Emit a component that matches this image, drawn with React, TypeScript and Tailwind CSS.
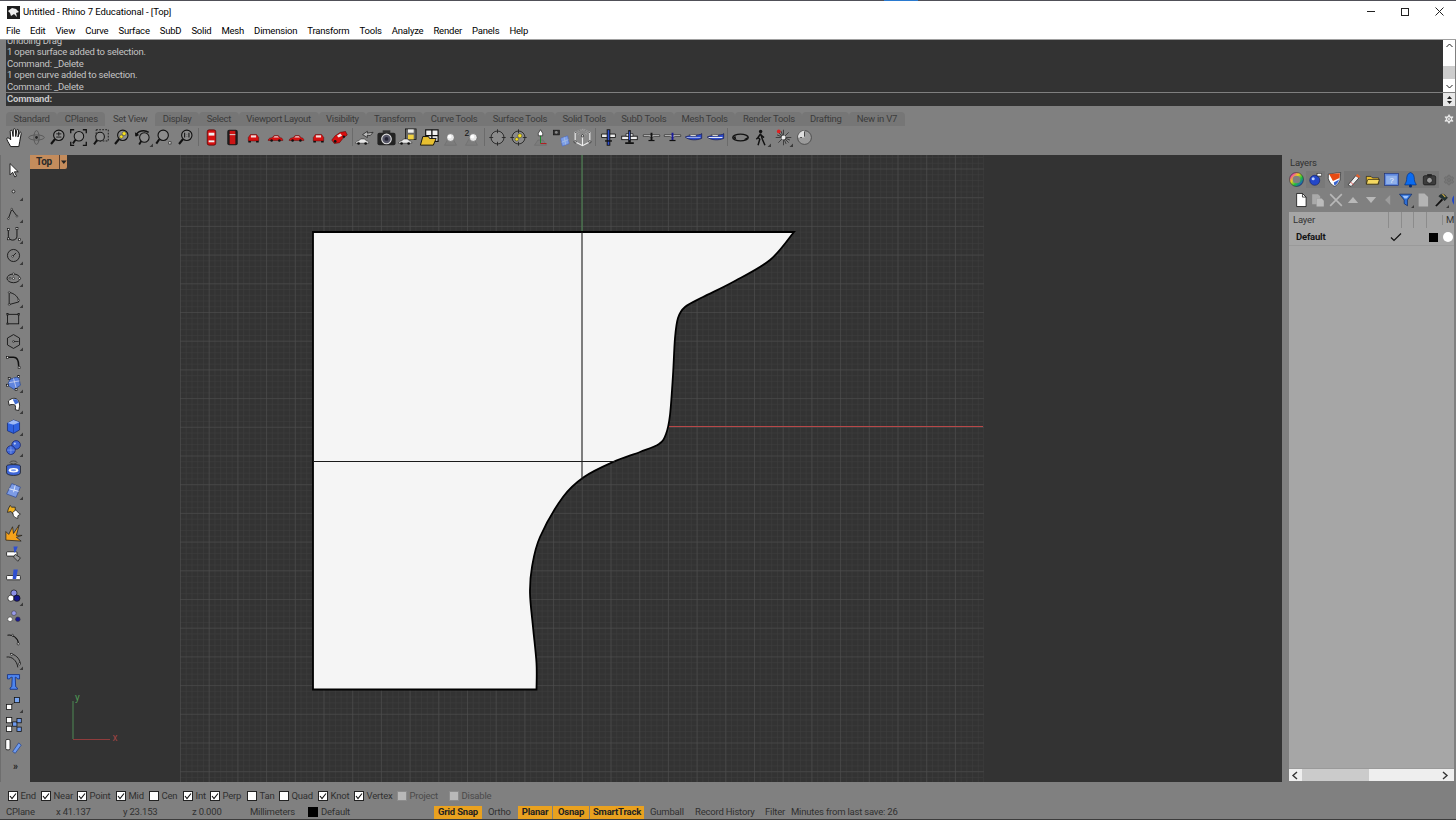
import React from "react";
import { Settings } from "lucide-react";

const K = "#111";
const BL = "#2f4fd0";

function Ico({ children, fly, s = 19 }: { children?: React.ReactNode; fly?: boolean; s?: number }) {
  return (
    <svg width={s} height={s} viewBox="0 0 22 22" className="block flex-none overflow-visible">
      {children}
      {fly && <path d="M22 18V22H18Z" fill="#3a3a3a" />}
    </svg>
  );
}

const Glass = ({ fill = "#8c8c8c", children }: { fill?: string; children?: React.ReactNode }) => (
  <>
    <circle cx="12.5" cy="8.5" r="6" fill={fill} stroke={K} strokeWidth="1.3" />
    <path d="M8 13L3.5 18.5" stroke={K} strokeWidth="2.4" />
    {children}
  </>
);

const CarSide = ({ dark }: { dark?: boolean }) => (
  <>
    <path d="M2.5 14.5C2.5 12 5 11.5 7 11.2L9.5 8.8H14L16.5 11.2C18.5 11.5 19.5 12.5 19.5 14.5Z" fill={dark ? "#222" : "#d81010"} stroke="#5a0a0a" strokeWidth=".6" />
    <path d="M8.5 11L10 9.5H13.5L15 11Z" fill="#ddd" />
    <circle cx="6.5" cy="14.5" r="1.5" fill="#111" />
    <circle cx="15.5" cy="14.5" r="1.5" fill="#111" />
  </>
);
const CarWhite = () => (
  <>
    <path d="M1.5 17C1.5 15 3.5 14.8 5 14.5L7 12.5H11L13 14.5C15 14.8 15.5 15.5 15.5 17Z" fill="#e8e8e8" stroke="#222" strokeWidth=".6" />
    <circle cx="4.8" cy="17.3" r="1.4" fill="#111" />
    <circle cx="12.2" cy="17.3" r="1.4" fill="#111" />
  </>
);
const CarFront = () => (
  <>
    <path d="M5 15V11L7.5 7.5H14.5L17 11V15Z" fill="#d81010" stroke="#5a0a0a" strokeWidth=".6" />
    <rect x="8" y="8.5" width="6" height="2.5" fill="#f0e0e0" />
    <rect x="5" y="15" width="3" height="1.8" fill="#111" />
    <rect x="14" y="15" width="3" height="1.8" fill="#111" />
  </>
);
const PlaneSide = ({ alt }: { alt?: boolean }) => (
  <>
    <path d="M1.5 10.5C5 8.5 14 8.5 19 7.5L20.5 6.5V12C15 14.5 6 14.5 1.5 10.5Z" fill={BL} stroke="#0a0a40" strokeWidth=".7" />
    <path d="M6 7.5H13L15 9.5H8Z" fill="#eee" stroke={K} strokeWidth=".5" />
    <path d="M3 11H19" stroke="#fff" strokeWidth={alt ? 1 : 0.6} />
  </>
);
const PlaneTop = ({ dark }: { dark?: boolean }) => (
  <>
    <path d="M1.5 8H20.5V9.8H14L11 11L8 9.8H1.5Z" fill="#e6e6e6" stroke={K} strokeWidth=".7" />
    <path d="M11 5.5V15" stroke={dark ? "#1a1a9a" : K} strokeWidth="2.2" />
    <path d="M7.5 14.5H14.5" stroke={K} strokeWidth="1.4" />
  </>
);
const Sphere = ({ c = 11, y = 11, r = 4.5 }: { c?: number; y?: number; r?: number }) => (
  <>
    <circle cx={c} cy={y} r={r} fill="#e8e8e8" stroke="#444" strokeWidth=".6" />
    <circle cx={c - 1} cy={y - 1} r={r / 2.2} fill="#fff" />
  </>
);
const Cross = ({ y }: { y?: boolean }) => (
  <>
    <circle cx="11" cy="11" r="7.5" fill="#8a8a8a" stroke="#222" strokeWidth="1" />
    <path d="M11 1.5V6M11 16V20.5M1.5 11H6M16 11H20.5" stroke="#222" strokeWidth="1" />
    {y && <><circle cx="12.5" cy="9" r="2.4" fill="#f5e020" stroke="#222" strokeWidth=".5" /><circle cx="9" cy="13" r="2" fill="#f5e020" stroke="#222" strokeWidth=".5" /></>}
  </>
);
const Dot = ({ x, y, r = 1.3 }: { x: number; y: number; r?: number }) => <circle cx={x} cy={y} r={r} fill="#eee" stroke={K} strokeWidth=".8" />;
const Sq = ({ x, y, f = "#fff", s = 2.2 }: { x: number; y: number; f?: string; s?: number }) => <rect x={x - s / 2} y={y - s / 2} width={s} height={s} fill={f} stroke={K} strokeWidth=".8" />;

const topGroups: React.ReactNode[][] = [
  [
    <Ico s={21}><path d="M7 20.5C5 16.5 2.5 13.5 3 11.8C4 10.8 6 12 7 13.5L6.5 4.5C6.5 3 8.5 3 8.7 4.5L9.5 10L9.8 2.8C10 1.5 12 1.5 12 3L12.3 10L13.4 3.5C13.7 2 15.5 2.3 15.3 4L14.6 10.5L16.3 6C16.8 4.8 18.3 5.3 18 7L16.5 15C16 17 16 19 15.5 20.5Z" fill="#fff" stroke={K} strokeWidth="1" /></Ico>,
    <Ico><ellipse cx="11" cy="11" rx="9" ry="3" fill="none" stroke="#555" strokeWidth="1" /><ellipse cx="11" cy="11" rx="3" ry="8" fill="none" stroke="#555" strokeWidth="1" /><circle cx="11" cy="11" r="1.6" fill="#222" /></Ico>,
    <Ico><Glass><path d="M9.5 6.8H15.5M12.5 4.5V9M9.5 10.5H15.5" stroke={K} strokeWidth="1" /></Glass></Ico>,
    <Ico><path d="M2 6V2H6M16 2H20V6M20 16V20H16M6 20H2V16" fill="none" stroke={K} strokeWidth="1.5" /><circle cx="11.5" cy="9.5" r="5.5" fill="#8c8c8c" stroke={K} strokeWidth="1.2" /><path d="M7.5 13.5L4.5 18" stroke={K} strokeWidth="2.2" /></Ico>,
    <Ico><rect x="6" y="2" width="14" height="13" fill="none" stroke={K} strokeWidth="1" strokeDasharray="2 1.5" /><circle cx="10.5" cy="10" r="5" fill="#8c8c8c" stroke={K} strokeWidth="1.2" /><path d="M7 14L3.5 19" stroke={K} strokeWidth="2.2" /></Ico>,
    <Ico><Glass><circle cx="14" cy="6.5" r="2.3" fill="#f5e020" stroke="#333" strokeWidth=".5" /><circle cx="10.8" cy="10" r="2" fill="#f5e020" stroke="#333" strokeWidth=".5" /></Glass></Ico>,
    <Ico fly><circle cx="12" cy="11" r="5.5" fill="#8c8c8c" stroke={K} strokeWidth="1.2" /><path d="M8.5 15L6 19" stroke={K} strokeWidth="2.2" /><path d="M2 9C4 3 12 1.5 17 5" fill="none" stroke={K} strokeWidth="1.8" /><path d="M1 5L2 10L6 8Z" fill={K} /></Ico>,
    <Ico><circle cx="9.5" cy="8.5" r="6" fill="#8c8c8c" stroke={K} strokeWidth="1.3" /><path d="M5 13L1.5 18" stroke={K} strokeWidth="2.4" /><rect x="16" y="16" width="2.5" height="2.5" fill="#fff" stroke={K} strokeWidth=".7" /></Ico>,
    <Ico><Glass><path d="M10 5.5V11M15 5.5V11M12.5 7V7.2M12.5 9.5V9.7" stroke={K} strokeWidth="1.2" /></Glass></Ico>,
  ],
  [
    <Ico s={21}><rect x="6.5" y="3" width="9" height="16" rx="2" fill="#d81010" stroke="#400" strokeWidth=".7" /><rect x="8" y="6" width="6" height="3" fill="#eee" /><rect x="8" y="14" width="6" height="2" fill="#eee" /></Ico>,
    <Ico s={21}><rect x="5.5" y="3" width="11" height="16" rx="2" fill="#1c1c1c" /><rect x="8" y="4" width="6" height="14" fill="#cc1515" /><path d="M8 8H14" stroke="#ddd" strokeWidth="1" /></Ico>,
    <Ico><CarFront /></Ico>,
    <Ico><CarSide /></Ico>,
    <Ico><CarSide /></Ico>,
    <Ico><CarFront /></Ico>,
    <Ico><path d="M2 14L6 9L12 5L18 4L20 8L15 12L11 17L5 18Z" fill="#d81010" stroke="#500" strokeWidth=".6" /><path d="M8 9L12 6.5L14 9L10 11Z" fill="#eee" /><circle cx="6" cy="15.5" r="1.6" fill="#111" /><circle cx="16" cy="10" r="1.4" fill="#111" /></Ico>,
  ],
  [
    <Ico s={21}><CarWhite /><path d="M9 8L14 4.5V6.5L20 5.5L17 9L14 8.5V11Z" fill="#bbb" stroke={K} strokeWidth=".7" /></Ico>,
    <Ico s={21}><rect x="1.5" y="6" width="19" height="13" rx="2" fill="#222" /><rect x="7" y="3.5" width="8" height="3" fill="#333" /><circle cx="11" cy="12.5" r="5" fill="#556" stroke="#ddd" strokeWidth="1.2" /><circle cx="11" cy="12.5" r="2" fill="#223" /></Ico>,
    <Ico s={21}><rect x="9" y="2" width="11" height="11" fill="#666" stroke={K} strokeWidth=".8" /><rect x="11.5" y="2.5" width="6" height="3.5" fill="#eee" /><rect x="11.5" y="8" width="6" height="5" fill="#f0d040" /><CarWhite /></Ico>,
    <Ico s={21}><path d="M7 3H20V15H7Z" fill="#f0f0f0" stroke={K} strokeWidth="1.2" /><path d="M13.5 3V15M7 9H20" stroke={K} strokeWidth="1.4" /><path d="M1.5 19L4 10H10L11 12H18L15 19Z" fill="#e8c030" stroke={K} strokeWidth="1" /></Ico>,
    <Ico><path d="M4 20L8 13H14L18 20Z" fill="#7c7c7c" stroke="#6a6a6a" strokeWidth=".6" /><Sphere /></Ico>,
    <Ico><path d="M4 20L8 13H14L18 20Z" fill="#7c7c7c" stroke="#6a6a6a" strokeWidth=".6" /><Sphere c={13} /><text x="3" y="9" fontSize="10" fill="#111" fontFamily="'Liberation Sans',sans-serif">2</text></Ico>,
  ],
  [
    <Ico><Cross /></Ico>,
    <Ico><Cross y /></Ico>,
    <Ico><path d="M4 20L8 14H14L18 20Z" fill="#7c7c7c" stroke="#666" strokeWidth=".6" /><path d="M11 8V18" stroke="#1a8a2a" strokeWidth="1.2" /><path d="M11 18H18" stroke="#b02020" strokeWidth="1.2" /><path d="M8.5 6L11 2L13.5 6V9H8.5Z" fill="#fff" stroke={K} strokeWidth=".7" /></Ico>,
    <Ico><rect x="1.5" y="2.5" width="7" height="5.5" fill="#333" stroke={K} strokeWidth=".7" /><circle cx="5" cy="5.2" r="1.6" fill="#888" /><path d="M10 12L18 9L20 18L12 21Z" fill="#7ea0e8" stroke="#4a68c0" strokeWidth=".7" /><path d="M14 10.5L16 19.5M11 16.5L19 13.5" stroke="#bcd" strokeWidth=".6" /></Ico>,
    <Ico><path d="M11 1.5L19.5 5V16L11 20.5L2.5 16V5Z" fill="#8a8a8a" stroke="#eee" strokeWidth="1.3" /><path d="M2.5 5L11 9V20.5M11 9L19.5 5" stroke="#eee" strokeWidth="1.3" fill="none" /><path d="M11 1.5L19.5 5L11 9L2.5 5Z" fill="none" stroke={K} strokeWidth=".6" /><Dot x={11} y={9} /><Dot x={2.5} y={16} /><Dot x={19.5} y={16} /></Ico>,
  ],
  [
    <Ico><path d="M3 7H19V11H3Z" fill="#eee" stroke={K} strokeWidth="1" /><path d="M11 1.5V20.5" stroke={K} strokeWidth="4.2" /><path d="M11 2.5V19.5" stroke={BL} strokeWidth="2" /><path d="M7 15H15" stroke={K} strokeWidth="1.6" /></Ico>,
    <Ico><rect x="2" y="9.5" width="18" height="4" fill="#eee" stroke={K} strokeWidth="1" /><path d="M7 6.5H15V9.5H7Z" fill="#eee" stroke={K} strokeWidth=".8" /><path d="M11 2.5V17" stroke={K} strokeWidth="3" /><path d="M11 4V14" stroke={BL} strokeWidth="1.4" /><path d="M6 17.5H16" stroke={K} strokeWidth="2" /></Ico>,
    <Ico><PlaneTop /></Ico>,
    <Ico><PlaneTop dark /></Ico>,
    <Ico><PlaneSide /></Ico>,
    <Ico><PlaneSide alt /></Ico>,
  ],
  [
    <Ico><ellipse cx="11" cy="11" rx="9" ry="4" fill="none" stroke={K} strokeWidth="1.5" /><path d="M5 9L2 12L6 13Z" fill={K} /><path d="M15 13L20 10L18 14Z" fill={K} /></Ico>,
    <Ico fly><circle cx="10" cy="4" r="2" fill={K} /><path d="M10 6.5L7 11L9 13L7 20M10 6.5L12 13L15 20M10 8L14 11M7 11L5 13" fill="none" stroke={K} strokeWidth="1.7" /></Ico>,
    <Ico fly><path d="M11 2V20M2 11H20M5 5L17 17M17 5L5 17M8 3.5L14 18.5M3.5 8L18.5 14" stroke="#222" strokeWidth=".8" /><circle cx="11" cy="11" r="2.2" fill="#eee" /><circle cx="5.5" cy="4" r="2.2" fill="#e02020" /></Ico>,
    <Ico><circle cx="11" cy="11" r="8" fill="#9a9a9a" stroke="#444" strokeWidth="1" /><path d="M3.5 11A8 8 0 0 1 11 3L11 11Z" fill="#ddd" /><path d="M11 4V10M8 11H6" stroke="#333" strokeWidth="1" /></Ico>,
  ],
];

const leftIcons: React.ReactNode[] = [
  <Ico><path d="M7 3V16L10 13L12.5 18.5L14.5 17.5L12 12.5H16.5Z" fill="#fff" stroke={K} strokeWidth="1" /></Ico>,
  <Ico fly><circle cx="11" cy="11" r="1.6" fill="#ccc" stroke={K} strokeWidth=".9" /></Ico>,
  <Ico fly><path d="M5 17L9 6L15 14" fill="none" stroke={K} strokeWidth="1" /><Dot x={5} y={17} r={1} /><Dot x={9} y={6} r={1} /><Dot x={15} y={14} r={1} /></Ico>,
  <Ico fly><path d="M5 5V13C5 19 15 19 15 13V5" fill="none" stroke={K} strokeWidth="1.1" /><Sq x={5} y={5} /><Sq x={15} y={4} /><Sq x={5} y={16} /><Sq x={18} y={17} /></Ico>,
  <Ico fly><circle cx="11" cy="11" r="7" fill="none" stroke={K} strokeWidth="1" /><path d="M10 12L14 8" stroke={K} strokeWidth="1" /><Dot x={10} y={12} r={1} /></Ico>,
  <Ico fly><ellipse cx="11" cy="12" rx="7.5" ry="5" fill="none" stroke={K} strokeWidth="1" /><Dot x={11} y={7} r={1.2} /><Dot x={11} y={12} r={1.2} /><Dot x={18} y={12} r={1.2} /><Dot x={7} y={12} r={1} /></Ico>,
  <Ico fly><path d="M6 4C12 5 17 9 17 15L6 18Z" fill="none" stroke={K} strokeWidth="1" /><Dot x={6} y={4} r={1} /><Dot x={17} y={13} r={1} /><Dot x={6} y={18} r={1} /></Ico>,
  <Ico fly><rect x="4" y="5" width="13" height="11" fill="none" stroke={K} strokeWidth="1" /><Sq x={4} y={5} s={1.6} /><Sq x={17} y={5} s={1.6} /><Sq x={4} y={16} s={1.6} /></Ico>,
  <Ico fly><path d="M11 3L18 7V15L11 19L4 15V7Z" fill="none" stroke={K} strokeWidth="1" /><Dot x={11} y={11} r={1.1} /><path d="M11 11H17" stroke={K} strokeWidth=".8" /></Ico>,
  <Ico><path d="M5 5H11C15 5 17 9 17 15" fill="none" stroke={K} strokeWidth="1.7" /><Sq x={4} y={5} /><Sq x={17.5} y={17} /></Ico>,
  <Ico fly><path d="M7 6L17 3L19 13L12 18L4 13Z" fill="#5f84dd" stroke="#22418e" strokeWidth=".8" /><path d="M11 5L14 16M6 10L18 8" stroke="#dde" strokeWidth=".8" /><Sq x={6} y={5} /><Sq x={17} y={3} /><Sq x={4} y={13} /><Sq x={14} y={18} /></Ico>,
  <Ico fly><path d="M5 7C9 3 14 3 16 6C19 10 18 14 17 18L13 17C14 13 13 11 11 11C9 11 7 11 6 12Z" fill="#fff" stroke={K} strokeWidth="1" /><path d="M10 5L13 11L17 9L15 5Z" fill="#3f6ad0" /></Ico>,
  <Ico fly><path d="M4 7L11 3.5L18 6V15L11 19L4 16Z" fill="#2f62e0" stroke="#10246e" strokeWidth=".8" /><path d="M4 7L11 3.5L18 6L11 9Z" fill="#9db9f5" /><path d="M11 9V19" stroke="#1b3596" strokeWidth=".7" /></Ico>,
  <Ico fly><circle cx="14" cy="8" r="5" fill="#3e66d8" stroke="#111a60" strokeWidth=".8" /><circle cx="8" cy="14" r="5" fill="#3e66d8" stroke="#111a60" strokeWidth=".8" /><path d="M3.5 14H12.5M8 9.5V18.5" stroke="#a8bcf0" strokeWidth=".6" /><circle cx="12.5" cy="6.5" r="1.3" fill="#b8c8f5" /></Ico>,
  <Ico><ellipse cx="11" cy="4" rx="4" ry="1.7" fill="none" stroke="#333" strokeWidth=".8" /><path d="M3 8C3 6 19 6 19 8V16C19 20 3 20 3 16Z" fill="#3e66d8" stroke="#111" strokeWidth=".8" /><ellipse cx="11" cy="13" rx="5.5" ry="2.6" fill="#fff" /><ellipse cx="11" cy="13" rx="3" ry="1.2" fill="#7e9eee" /></Ico>,
  <Ico fly><path d="M3 15L9 3L19 7L14 19Z" fill="#7d9ce6" stroke="#2c468f" strokeWidth=".8" /><path d="M11 13L13 5M6 9L17 12" stroke="#e4ebfb" strokeWidth="1" /></Ico>,
  <Ico><path d="M5 8L7 4L9 6L13 6L13 10L15 12L11 14L8 11L4 12Z" fill="#f0b020" stroke={K} strokeWidth=".8" /><path d="M10 12L14 9L16 12L19 14L16 16L16 19L13 18L11 16Z" fill="#fff" stroke={K} strokeWidth=".8" /></Ico>,
  <Ico s={21}><path d="M3 19V10L6 13L10 5L11 12L17 3L14 14L20 14L14 16L19 20Z" fill="#f6a21a" stroke="#222" strokeWidth=".8" /></Ico>,
  <Ico><rect x="3" y="9" width="12" height="5" rx="1" fill="#fff" stroke={K} strokeWidth=".9" /><path d="M11 3H16L13.5 9L12 10Z" fill="#2f4fd0" /><path d="M13 12L19 16L16 20L11 15Z" fill="#9a9a9a" stroke={K} strokeWidth=".8" /></Ico>,
  <Ico><rect x="3" y="11" width="16" height="5" rx="1" fill="#fff" stroke={K} strokeWidth=".9" /><path d="M11 4H16L14 15H10Z" fill="#2f4fd0" /></Ico>,
  <Ico fly><circle cx="11.5" cy="7" r="3.6" fill="#8d90e6" stroke={K} strokeWidth=".8" /><circle cx="8" cy="13" r="3.6" fill="#fff" stroke={K} strokeWidth=".8" /><circle cx="15" cy="13" r="3.6" fill="#15158c" stroke={K} strokeWidth=".8" /></Ico>,
  <Ico><circle cx="11.5" cy="6" r="2.7" fill="#9a9cea" stroke="#333" strokeWidth=".6" /><circle cx="7" cy="13" r="2.7" fill="#fff" stroke="#333" strokeWidth=".6" /><circle cx="16" cy="13" r="2.7" fill="#1a1a90" stroke="#333" strokeWidth=".6" /></Ico>,
  <Ico><path d="M4 6C10 5 16 9 17 16" fill="none" stroke={K} strokeWidth="1.2" /><Dot x={10} y={6} r={1} /><Dot x={16.5} y={16} r={1.3} /></Ico>,
  <Ico fly><path d="M3 7C9 6 15 11 16 19M7 3C13 4 18 8 19 15" fill="none" stroke={K} strokeWidth="1" /><Dot x={9} y={4} r={1.2} /><Dot x={18} y={15} r={1.2} /></Ico>,
  <Ico><path d="M4 3H18V8H15.5C15 6.5 14 6 13 6L13.5 17L15.5 18.5V20H7V18.5L9 17L9.5 6C8 6 7 6.5 6.5 8H4Z" fill="#4f86ee" stroke="#0c2a80" strokeWidth=".9" /></Ico>,
  <Ico fly><rect x="3" y="12" width="6" height="6" fill="#fff" stroke={K} strokeWidth=".9" /><rect x="12" y="4" width="6" height="6" fill="#79a6f2" stroke={K} strokeWidth=".9" /><path d="M9 12L12 10" stroke={K} strokeWidth=".9" strokeDasharray="1.5 1" /></Ico>,
  <Ico><rect x="3" y="3" width="6" height="6" fill="#fff" stroke={K} strokeWidth=".9" /><rect x="3" y="13" width="6" height="6" fill="#fff" stroke={K} strokeWidth=".9" /><rect x="10" y="8" width="5" height="5" fill="#6f9cf0" stroke={K} strokeWidth=".9" /><rect x="15" y="4" width="5" height="5" fill="#6f9cf0" stroke={K} strokeWidth=".9" /><rect x="15" y="14" width="5" height="5" fill="#6f9cf0" stroke={K} strokeWidth=".9" /></Ico>,
  <Ico><rect x="2" y="4" width="5" height="12" rx="1.5" fill="#fff" stroke={K} strokeWidth=".9" /><path d="M10 18L17 8L20 10.5L13 20Z" fill="#6f9cf0" stroke="#22418e" strokeWidth=".8" /></Ico>,
];

const layerRow1: React.ReactNode[] = [
  <Ico s={17}><circle cx="11" cy="11" r="7" fill="none" stroke="url(#rb)" strokeWidth="4" /><circle cx="11" cy="11" r="9" fill="none" stroke={K} strokeWidth=".6" /></Ico>,
  <Ico s={17}><circle cx="10" cy="12" r="6.5" fill="#2347c8" stroke="#0a1660" strokeWidth=".7" /><circle cx="8" cy="10" r="2" fill="#bfd0ff" /><rect x="13" y="3" width="6" height="3.5" fill="#fff" stroke={K} strokeWidth=".7" /></Ico>,
  <Ico s={17}><path d="M3 4L19 2L18 12C16 17 13 19 11 20C7 18 4 14 3 10Z" fill="#fff" stroke={K} strokeWidth=".8" /><path d="M4 4L18 3L17.5 9L9 13Z" fill="#e64a12" /><path d="M11 19C14 17 16 14 17 11L10 15Z" fill="#3460d0" /></Ico>,
  <Ico s={17}><path d="M4 18L14 6L18 9L8 20Z" fill="#eee" stroke={K} strokeWidth=".8" /><path d="M14 6L16 4L20 7L18 9Z" fill="#e06030" /><path d="M7 14L11 18" stroke="#d33" strokeWidth="1" /></Ico>,
  <Ico s={17}><path d="M3 7H9L11 9H19V17H3Z" fill="#e6bb2e" stroke={K} strokeWidth=".8" /><path d="M3 17L5 11H20L18 17Z" fill="#f5d860" stroke={K} strokeWidth=".8" /></Ico>,
  <Ico s={17}><rect x="2" y="3" width="18" height="16" fill="#5d86dd" stroke="#1c2d70" strokeWidth=".8" /><rect x="4" y="6" width="14" height="11" fill="#8fb0ea" /><text x="11" y="15" textAnchor="middle" fontSize="10" fill="#e8f0ff" fontFamily="'Liberation Sans',sans-serif">?</text></Ico>,
  <Ico s={17}><path d="M11 2C7 3 6 7 6 11C6 14 4 16 3.5 18H18.5C18 16 16 14 16 11C16 7 15 3 11 2Z" fill="#0a6bf0" stroke="#062a70" strokeWidth=".8" /><circle cx="11" cy="19.5" r="2" fill="#062a70" /></Ico>,
  <Ico s={17}><rect x="3" y="6" width="16" height="12" rx="2" fill="#3c3c3c" stroke={K} strokeWidth=".8" /><rect x="8" y="4" width="6" height="3" fill="#222" /><circle cx="11" cy="12" r="3.8" fill="#9a9a9a" stroke="#111" strokeWidth="1" /></Ico>,
];

const layerRow2: React.ReactNode[] = [
  <Ico s={16}><path d="M5 2H13L18 7V20H5Z" fill="#fff" stroke={K} strokeWidth="1.1" /><path d="M13 2V7H18" fill="none" stroke={K} strokeWidth="1" /></Ico>,
  <Ico s={16}><path d="M3 3H11L14 6V9H9V17H3Z" fill="#aaa" /><path d="M9 9H16L19 12V20H9Z" fill="#bbb" /></Ico>,
  <Ico s={16}><path d="M3 3L19 19M19 3L3 19" stroke="#b8b8b8" strokeWidth="2.2" /></Ico>,
  <Ico s={16}><path d="M4 15L11 7L18 15Z" fill="#b8b8b8" /></Ico>,
  <Ico s={16}><path d="M4 7L11 15L18 7Z" fill="#b8b8b8" /></Ico>,
  <Ico s={16}><path d="M14 4L7 11L14 18Z" fill="#9c9c9c" /></Ico>,
  <Ico s={16} fly><path d="M2 3H19L13 11V19L8.5 16V11Z" fill="#2e6fd4" stroke="#0a2460" strokeWidth=".9" /><path d="M6 5H15L12 9H9Z" fill="#9fc4ff" /></Ico>,
  <Ico s={16}><path d="M5 2H13L18 7V20H5Z" fill="#b4b4b4" /></Ico>,
  <Ico s={16} fly><path d="M3 19L12 9L14 11L5 20Z" fill="#111" /><path d="M8 6C10 2 16 2 18 6L20 8L16 12L13 9L11 8Z" fill="#233" stroke="#000" strokeWidth=".5" /><path d="M13 3L17 7" stroke="#d2b048" strokeWidth="1.5" /></Ico>,
];

const tabs = ["Standard", "CPlanes", "Set View", "Display", "Select", "Viewport Layout", "Visibility", "Transform", "Curve Tools", "Surface Tools", "Solid Tools", "SubD Tools", "Mesh Tools", "Render Tools", "Drafting", "New in V7"];
const menus = ["File", "Edit", "View", "Curve", "Surface", "SubD", "Solid", "Mesh", "Dimension", "Transform", "Tools", "Analyze", "Render", "Panels", "Help"];
const snaps: [string, boolean, string][] = [
  ["End", true, "w-[33px]"], ["Near", true, "w-[36px]"], ["Point", true, "w-[39px]"], ["Mid", true, "w-[33px]"], ["Cen", false, "w-[34px]"], ["Int", true, "w-[27px]"], ["Perp", true, "w-[37px]"], ["Tan", false, "w-[32px]"],
  ["Quad", false, "w-[39px]"], ["Knot", true, "w-[36px]"], ["Vertex", true, "w-[43px]"], ["Project", false, "w-[52px]"], ["Disable", false, "w-[50px]"],
];

function Box({ on, dis }: { on?: boolean; dis?: boolean }) {
  return (
    <span className={`flex h-[10px] w-[10px] flex-none items-center justify-center border ${dis ? "border-[#8c8c8c] bg-[#b8b8b8]" : "border-[#222] bg-white"}`}>
      {on && (
        <svg width="8" height="8" viewBox="0 0 8 8">
          <path d="M1 4L3 6.5L7 1.5" fill="none" stroke="#111" strokeWidth="1.1" />
        </svg>
      )}
    </span>
  );
}

function smooth(p: number[][]) {
  let d = "";
  for (let i = 0; i < p.length - 1; i++) {
    const a = p[Math.max(i - 1, 0)], b = p[i], c = p[i + 1], e = p[Math.min(i + 2, p.length - 1)];
    d += `C${b[0] + (c[0] - a[0]) / 6} ${b[1] + (c[1] - a[1]) / 6} ${c[0] - (e[0] - b[0]) / 6} ${c[1] - (e[1] - b[1]) / 6} ${c[0]} ${c[1]}`;
  }
  return d;
}

const edge = [[794, 232], [770, 260], [733, 282], [703, 297], [685, 307], [678, 318], [675, 338], [673, 375], [670, 415], [666, 434], [659, 444], [640, 452], [613, 462], [584, 477], [563, 497], [540, 537], [532, 567], [530, 593], [533, 627], [536.5, 663], [536.5, 689.5]];
const shape = `M313 232L794 232${smooth(edge)}L313 689.5Z`;

function Canvas() {
  return (
    <svg viewBox="30 155 1252 627" className="absolute inset-0 h-full w-full" aria-hidden>
      <defs>
        <pattern id="minor" x="180" y="197.2" width="5.74" height="5.74" patternUnits="userSpaceOnUse">
          <path d="M0 0V5.74M0 0H5.74" stroke="#3f3f3f" strokeWidth="1" fill="none" />
        </pattern>
        <pattern id="major" x="180" y="197.2" width="28.7" height="28.7" patternUnits="userSpaceOnUse">
          <path d="M0 0V28.7M0 0H28.7" stroke="#505050" strokeWidth="1" fill="none" />
        </pattern>
      </defs>
      <rect x="180" y="155" width="803" height="627" fill="url(#minor)" />
      <rect x="180" y="155" width="804" height="627" fill="url(#major)" />
      <path d="M582 155V232" stroke="#4f8a55" strokeWidth="1" />
      <path d="M667 426.5H983" stroke="#b84848" strokeWidth="1" />
      <path d={shape} fill="#f5f5f5" stroke="#000" strokeWidth="1.8" strokeLinejoin="miter" />
      <path d="M582 232V480" stroke="#1a1a1a" strokeWidth="1.1" />
      <path d="M313 461.5H615" stroke="#1a1a1a" strokeWidth="1.1" />
      <path d="M73 701V739" stroke="#4f8a55" strokeWidth="1" />
      <path d="M73 739.5H110" stroke="#8f3c3c" strokeWidth="1" />
      <text x="75" y="701" fontSize="10" fill="#4f9a55" fontFamily="'Roboto',sans-serif">y</text>
      <text x="112.5" y="740.5" fontSize="10" fill="#a04444" fontFamily="'Roboto',sans-serif">x</text>
    </svg>
  );
}

export default function App() {
  return (
    <div className="flex h-[820px] w-[1456px] flex-col overflow-hidden bg-[#808080] text-[9.5px] leading-none tracking-[-0.2px] text-[#1c1c1c] [font-family:'Roboto','Noto_Sans',sans-serif]">
      <svg width="0" height="0" className="absolute">
        <defs>
          <linearGradient id="rb" x1="0" y1="0" x2="1" y2="1">
            <stop offset="0" stopColor="#e81fd0" /><stop offset=".35" stopColor="#f0d020" /><stop offset=".65" stopColor="#20c040" /><stop offset="1" stopColor="#2040e0" />
          </linearGradient>
        </defs>
      </svg>
      {/* Title bar */}
      <div className="flex h-[1px] flex-none bg-[#505058]"><div className="ml-[884px] w-[34px] bg-[#2a7ad0]" /></div>
      <div className="flex h-[21px] flex-none items-center bg-white pl-[7px] text-black">
        <svg width="13" height="13" viewBox="0 0 13 13" className="mr-[3px] mt-[1px] flex-none">
          <rect width="13" height="13" fill="#1d1d1d" />
          <path d="M1 5L5 2L9 3L12 6L9 7L10 11L7 8L4 10L3 7Z" fill="#eee" />
        </svg>
        <span className="tracking-[-0.1px]">Untitled - Rhino 7 Educational - [Top]</span>
        <div className="ml-auto flex items-center text-[#111]">
          <div className="flex w-[34px] justify-center"><div className="h-[1px] w-[8px] bg-[#222]" /></div>
          <div className="flex w-[34px] justify-center"><div className="h-[8px] w-[8px] border border-[#222]" /></div>
          <div className="flex w-[34px] justify-center">
            <svg width="9" height="9" viewBox="0 0 9 9"><path d="M.5.5L8.5 8.5M8.5.5L.5 8.5" stroke="#222" strokeWidth="1" /></svg>
          </div>
        </div>
      </div>
      <div className="flex h-[17px] flex-none items-center gap-[10px] bg-white pl-[6px] pt-[1px] text-black">
        {menus.map((m) => <span key={m}>{m}</span>)}
      </div>
      <div className="h-[1px] flex-none bg-[#a0a0a0]" />
      {/* Command area */}
      <div className="flex h-[52px] flex-none bg-[#808080] pl-[6px] pr-[1px]">
        <div className="flex min-w-0 flex-1 flex-col justify-end overflow-hidden bg-[#333] pl-[1px] leading-[11.5px] text-[#c4c4c4]">
          <div>Undoing Drag</div>
          <div>1 open surface added to selection.</div>
          <div>Command: _Delete</div>
          <div>1 open curve added to selection.</div>
          <div>Command: _Delete</div>
        </div>
        <div className="flex w-[12px] flex-none flex-col items-center justify-between bg-white py-[3px]">
          <svg width="7" height="5" viewBox="0 0 7 5"><path d="M.5 4L3.5 1L6.5 4" fill="none" stroke="#222" /></svg>
          <div className="mt-[13px] h-[13px] w-full bg-[#cdcdcd]" />
          <svg width="7" height="5" viewBox="0 0 7 5"><path d="M.5 1L3.5 4L6.5 1" fill="none" stroke="#222" /></svg>
        </div>
      </div>
      <div className="flex h-[14px] flex-none bg-[#808080] pl-[6px] pr-[1px] pt-[1px]">
        <div className="flex flex-1 items-center bg-[#333] pb-[1px] pl-[1px] font-bold text-[#c8c8c8]">Command:</div>
        <div className="flex w-[12px] flex-none flex-col items-center justify-center gap-[2px] bg-[#e8e8e8]">
          <svg width="5" height="3" viewBox="0 0 5 3"><path d="M0 3L2.5 0L5 3Z" fill="#222" /></svg>
          <svg width="5" height="3" viewBox="0 0 5 3"><path d="M0 0L2.5 3L5 0Z" fill="#222" /></svg>
        </div>
      </div>
      {/* Toolbar tabs */}
      <div className="flex h-[20px] flex-none items-end pl-[6px] pr-[1px]">
        <div className="flex items-center">
          {tabs.map((t) => (
            <span key={t} className={`flex h-[14px] items-center rounded-t-[4px] px-[7.6px] tracking-[-0.27px] text-[#3c3c3c] ${t === "Set View" ? "bg-[#808080]" : "bg-[#767676]"}`}>{t}</span>
          ))}
        </div>
        <div className="mb-[1px] ml-auto flex w-[13px] justify-center"><Settings size={12} fill="#e8e8e8" color="#808080" strokeWidth={1.5} /></div>
      </div>
      {/* Icon row */}
      <div className="flex h-[22px] flex-none items-center pl-[4px]">
        {topGroups.map((g, gi) => (
          <React.Fragment key={gi}>
            {gi > 0 && <div className="mx-[1.5px] h-[18px] w-[1px] flex-none bg-[#6b6b6b]" />}
            {g.map((ic, i) => <div key={i} className="flex w-[21.4px] flex-none justify-center">{ic}</div>)}
          </React.Fragment>
        ))}
      </div>
      <div className="h-[7px] flex-none" />
      {/* Main */}
      <div className="flex min-h-0 flex-1">
        <div className="flex w-[30px] flex-none flex-col items-center overflow-hidden border-l border-[#6e6e6e] pr-[5px] pt-[5px]">
          {leftIcons.map((ic, i) => <div key={i} className="flex h-[21.3px] flex-none items-center justify-center">{ic}</div>)}
          <div className="flex h-[21.3px] flex-none items-center justify-center pl-[5px] text-[10px] font-bold text-[#222]">»</div>
        </div>
        <div className="relative w-[1252px] flex-none bg-[#333]">
          <Canvas />
          <div className="absolute left-0 top-0 flex h-[14px] w-[37px] items-center rounded-br-[2px] bg-[#c48c5c] pl-[6px] text-[10px] font-bold text-[#2a2a2a]">
            Top
            <span className="ml-[7px] h-full w-[1px] bg-[#5a4030]" />
            <svg width="7" height="5" viewBox="0 0 7 5" className="ml-[1.5px]"><path d="M0 0H7L3.5 4.5Z" fill="#222" /></svg>
          </div>
        </div>
        <div className="flex min-w-0 flex-1 flex-col pl-[7px] pr-[2px] pt-[3px]">
          <div className="h-[12px] pl-[1px] text-[#303030]">Layers</div>
          <div className="-ml-[2px] mt-[1px] flex h-[17px] items-center">
            {layerRow1.map((ic, i) => (
              <div key={i} className={`flex h-[17px] w-[19px] flex-none items-center justify-center ${i > 2 ? "bg-[#767676]" : i === 1 ? "bg-[#797979]" : ""}`}>{ic}</div>
            ))}
            <div className="ml-[4px] flex w-[19px] justify-center"><Settings size={12} color="#6e6e6e" fill="#777" /></div>
          </div>
          <div className="mt-[2px] flex h-[20px] items-center overflow-hidden pl-[3px]">
            {layerRow2.map((ic, i) => <div key={i} className="flex w-[17.5px] flex-none justify-center">{ic}</div>)}
            <svg width="14" height="14" viewBox="0 0 14 14" className="ml-[1px] flex-none"><circle cx="7" cy="7" r="6" fill="#2347c8" /></svg>
          </div>
          <div className="mt-[2px] flex min-h-0 flex-1 flex-col bg-[#a6a6a6]">
            <div className="flex h-[17px] flex-none items-center pb-[1px] text-[#333]">
              <span className="w-[101px] pl-[4px]">Layer</span>
              {[0, 1, 2, 3].map((n) => <span key={n} className="h-full w-[13px] border-l border-[#8c8c8c]" />)}
              <span className="ml-[3px] border-l border-[#8c8c8c] pl-[3px]">M</span>
            </div>
            <div className="flex h-[17px] flex-none items-center border-b border-[#9a9a9a] font-bold text-[#151515]">
              <span className="w-[101px] pl-[7px]">Default</span>
              <svg width="12" height="10" viewBox="0 0 12 10" className="flex-none"><path d="M1 5.5L4 8.5L11 1.5" fill="none" stroke="#111" strokeWidth="1.2" /></svg>
              <span className="ml-[27px] h-[9px] w-[9px] flex-none bg-black" />
              <span className="ml-[5px] h-[10px] w-[10px] flex-none rounded-full bg-white" />
            </div>
          </div>
          <div className="flex h-[13px] flex-none items-center border-t border-[#9a9a9a] bg-[#eeeeee]">
            <svg width="13" height="9" viewBox="0 0 13 9" className="flex-none"><path d="M8 1L4 4.5L8 8" fill="none" stroke="#333" strokeWidth="1.4" /></svg>
            <div className="h-full w-[67px] bg-[#cbcbcb]" />
            <svg width="13" height="9" viewBox="0 0 13 9" className="ml-auto flex-none"><path d="M5 1L9 4.5L5 8" fill="none" stroke="#333" strokeWidth="1.4" /></svg>
            <div className="w-[3px]" />
          </div>
          <div className="h-[1px] flex-none" />
        </div>
      </div>
      {/* Snap row */}
      <div className="flex h-[23px] flex-none items-center pl-[8px] pt-[5px] text-[#303030]">
        {snaps.map(([t, on, w]) => {
          const dis = t === "Project" || t === "Disable";
          return (
            <div key={t} className={`flex flex-none items-center gap-[2.5px] ${w}`}>
              <Box on={on} dis={dis} />
              <span className={dis ? "text-[#4a4a4a]" : ""}>{t}</span>
            </div>
          );
        })}
      </div>
      {/* Status row */}
      <div className="flex h-[14px] flex-none items-center whitespace-nowrap pl-[6px] text-[#303030]">
        <span className="w-[50px] flex-none">CPlane</span>
        <span className="w-[67px] flex-none">x 41.137</span>
        <span className="w-[69px] flex-none">y 23.153</span>
        <span className="w-[58px] flex-none">z 0.000</span>
        <span className="w-[58px] flex-none">Millimeters</span>
        <span className="h-[10px] w-[10px] flex-none bg-black" />
        <span className="ml-[3px] w-[113px] flex-none">Default</span>
        <span className="flex h-[13px] w-[48px] flex-none items-center justify-center bg-[#e9a11f] font-bold text-[#222]">Grid Snap</span>
        <span className="ml-[6px] w-[30px] flex-none">Ortho</span>
        <span className="flex h-[13px] w-[34px] flex-none items-center justify-center bg-[#e9a11f] font-bold text-[#222]">Planar</span>
        <span className="ml-[1px] flex h-[13px] w-[36px] flex-none items-center justify-center bg-[#e9a11f] font-bold text-[#222]">Osnap</span>
        <span className="ml-[1px] flex h-[13px] w-[54px] flex-none items-center justify-center bg-[#e9a11f] font-bold text-[#222]">SmartTrack</span>
        <span className="ml-[6px] w-[45px] flex-none">Gumball</span>
        <span className="w-[70px] flex-none">Record History</span>
        <span className="w-[26px] flex-none">Filter</span>
        <span className="flex-none">Minutes from last save: 26</span>
      </div>
      <div className="h-[1px] flex-none bg-[#3c3c3c]" />
    </div>
  );
}
